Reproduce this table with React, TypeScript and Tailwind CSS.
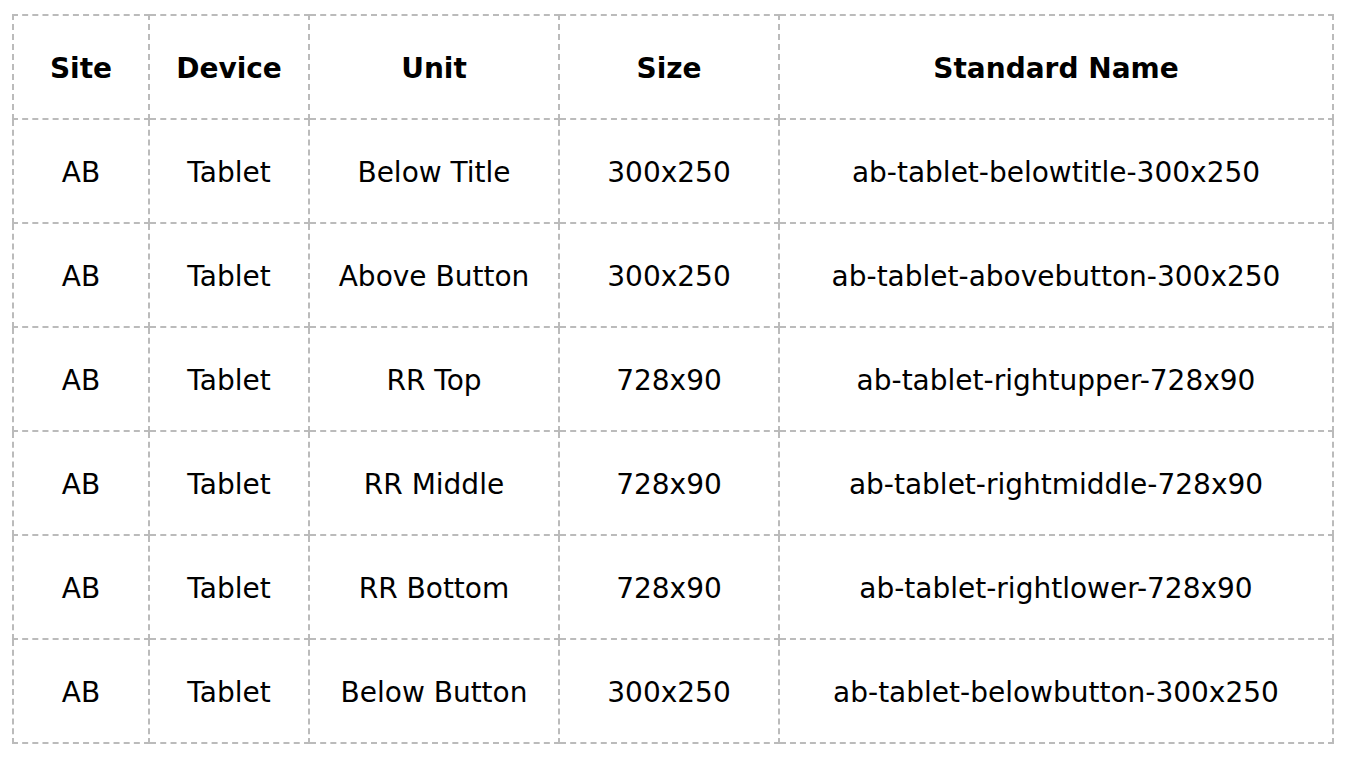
import React from 'react';

const rows = [
  ['AB', 'Tablet', 'Below Title', '300x250', 'ab-tablet-belowtitle-300x250'],
  ['AB', 'Tablet', 'Above Button', '300x250', 'ab-tablet-abovebutton-300x250'],
  ['AB', 'Tablet', 'RR Top', '728x90', 'ab-tablet-rightupper-728x90'],
  ['AB', 'Tablet', 'RR Middle', '728x90', 'ab-tablet-rightmiddle-728x90'],
  ['AB', 'Tablet', 'RR Bottom', '728x90', 'ab-tablet-rightlower-728x90'],
  ['AB', 'Tablet', 'Below Button', '300x250', 'ab-tablet-belowbutton-300x250'],
];

const cell = 'h-[104px] px-0 pt-[4px] pb-0 text-center align-middle border-2 border-dashed border-[#bbbbbb]';

export default function App() {
  return (
    <div className="min-h-screen bg-white pt-[14px] pl-[12px] font-['DejaVu_Sans',Verdana,sans-serif] text-[28px] text-black">
      <table className="border-collapse table-fixed w-[1322px]">
        <thead>
          <tr>
            <th className={`${cell} w-[136px] font-bold`}>Site</th>
            <th className={`${cell} w-[160px] font-bold`}>Device</th>
            <th className={`${cell} w-[250px] font-bold`}>Unit</th>
            <th className={`${cell} w-[220px] font-bold`}>Size</th>
            <th className={`${cell} font-bold`}>Standard Name</th>
          </tr>
        </thead>
        <tbody>
          {rows.map((r, i) => (
            <tr key={i}>
              {r.map((v, j) => (
                <td key={j} className={`${cell} font-normal`}>
                  {v}
                </td>
              ))}
            </tr>
          ))}
        </tbody>
      </table>
    </div>
  );
}
